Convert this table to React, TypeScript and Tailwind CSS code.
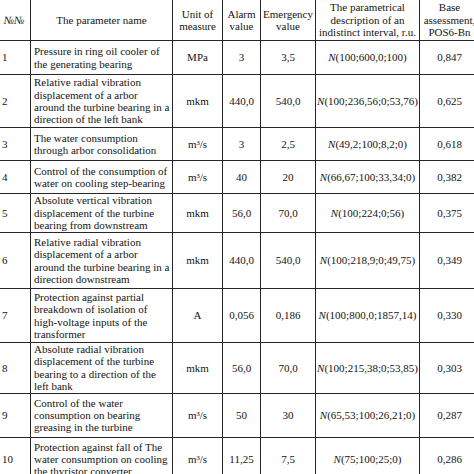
type Row = {
  no: string;
  name: string[];
  unit: string;
  alarm: string;
  emergency: string;
  desc: string;
  base: string;
  h: string;
};

const rows: Row[] = [
  { no: "1", name: ["Pressure in ring oil cooler of", "the generating bearing"], unit: "MPa", alarm: "3", emergency: "3,5", desc: "(100;600,0;100)", base: "0,847", h: "h-[34px]" },
  { no: "2", name: ["Relative radial vibration", "displacement of a arbor", "around the turbine bearing in a", "direction of the left bank"], unit: "mkm", alarm: "440,0", emergency: "540,0", desc: "(100;236,56;0;53,76)", base: "0,625", h: "h-[53px]" },
  { no: "3", name: ["The water consumption", "through arbor consolidation"], unit: "m³/s", alarm: "3", emergency: "2,5", desc: "(49,2;100;8,2;0)", base: "0,618", h: "h-[33px]" },
  { no: "4", name: ["Control of the consumption of", "water on cooling step-bearing"], unit: "m³/s", alarm: "40", emergency: "20", desc: "(66,67;100;33,34;0)", base: "0,382", h: "h-[33px]" },
  { no: "5", name: ["Absolute vertical vibration", "displacement of the turbine", "bearing from downstream"], unit: "mkm", alarm: "56,0", emergency: "70,0", desc: "(100;224;0;56)", base: "0,375", h: "h-[39px]" },
  { no: "6", name: ["Relative radial vibration", "displacement of a arbor", "around the turbine bearing in a", "direction downstream"], unit: "mkm", alarm: "440,0", emergency: "540,0", desc: "(100;218,9;0;49,75)", base: "0,349", h: "h-[56px]" },
  { no: "7", name: ["Protection against partial", "breakdown of isolation of", "high-voltage inputs of the", "transformer"], unit: "A", alarm: "0,056", emergency: "0,186", desc: "(100;800,0;1857,14)", base: "0,330", h: "h-[54px]" },
  { no: "8", name: ["Absolute radial vibration", "displacement of the turbine", "bearing to a direction of the", "left bank"], unit: "mkm", alarm: "56,0", emergency: "70,0", desc: "(100;215,38;0;53,85)", base: "0,303", h: "h-[50px]" },
  { no: "9", name: ["Control of the water", "consumption on bearing", "greasing in the turbine"], unit: "m³/s", alarm: "50", emergency: "30", desc: "(65,53;100;26,21;0)", base: "0,287", h: "h-[44px]" },
  { no: "10", name: ["Protection against fall of The", "water consumption on cooling", "the thyristor converter"], unit: "m³/s", alarm: "11,25", emergency: "7,5", desc: "(75;100;25;0)", base: "0,286", h: "h-[44px]" },
];

const cell = "border border-[#262626] p-0 align-middle";

function Lines({ lines }: { lines: string[] }) {
  return (
    <>
      {lines.map((l, i) => (
        <div key={i} className="whitespace-nowrap">
          {l}
        </div>
      ))}
    </>
  );
}

export default function App() {
  return (
    <div className="w-[474px] h-[474px] overflow-hidden bg-white">
      <table
        className="table-fixed border-collapse w-[482px] ml-[-3px] mt-[-1px] text-[11px] leading-[12.4px] text-[#141414]"
        style={{ fontFamily: '"Liberation Serif", "Times New Roman", serif' }}
      >
        <colgroup>
          <col className="w-[33px]" />
          <col className="w-[142px]" />
          <col className="w-[50px]" />
          <col className="w-[38px]" />
          <col className="w-[55px]" />
          <col className="w-[104px]" />
          <col className="w-[60px]" />
        </colgroup>
        <thead>
          <tr className="h-[41px]">
            <th className={`${cell} font-normal italic text-center`}>№№</th>
            <th className={`${cell} font-normal text-center`}>The parameter name</th>
            <th className={`${cell} font-normal text-center`}>
              <Lines lines={["Unit of", "measure"]} />
            </th>
            <th className={`${cell} font-normal text-center`}>
              <Lines lines={["Alarm", "value"]} />
            </th>
            <th className={`${cell} font-normal text-center`}>
              <Lines lines={["Emergency", "value"]} />
            </th>
            <th className={`${cell} font-normal text-center`}>
              <Lines lines={["The parametrical", "description of an", "indistinct interval, r.u."]} />
            </th>
            <th className={`${cell} font-normal text-center`}>
              <Lines lines={["Base", "assessment,", "POS6-Bn"]} />
            </th>
          </tr>
        </thead>
        <tbody>
          {rows.map((r) => (
            <tr key={r.no} className={r.h}>
              <td className={`${cell} pl-[4px]`}>{r.no}</td>
              <td className={`${cell} pl-[3px]`}>
                <Lines lines={r.name} />
              </td>
              <td className={`${cell} text-center`}>{r.unit}</td>
              <td className={`${cell} text-center`}>{r.alarm}</td>
              <td className={`${cell} text-center`}>{r.emergency}</td>
              <td className={`${cell} text-center whitespace-nowrap`}>
                <i>N</i>
                {r.desc}
              </td>
              <td className={`${cell} text-center`}>{r.base}</td>
            </tr>
          ))}
        </tbody>
      </table>
    </div>
  );
}
